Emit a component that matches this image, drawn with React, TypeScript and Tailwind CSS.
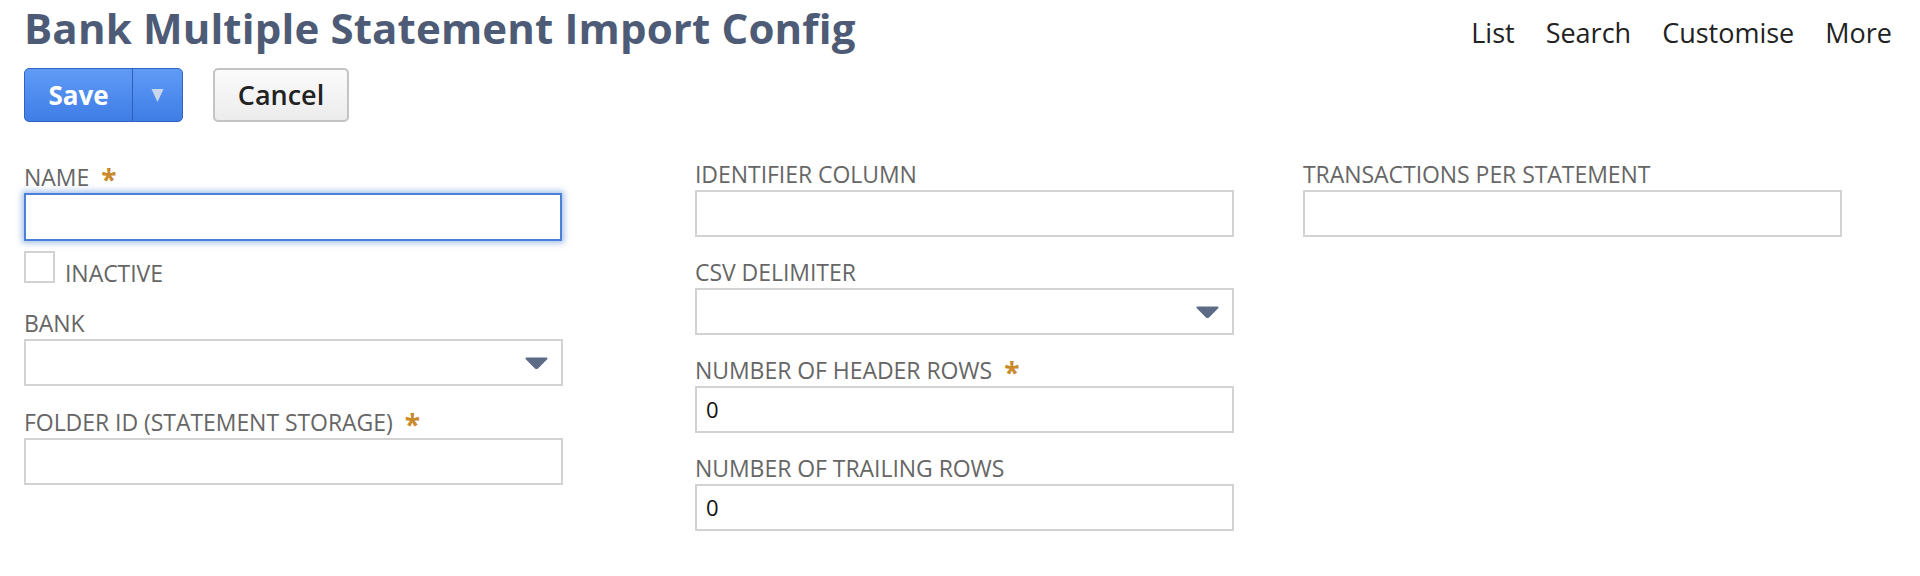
import { ReactNode } from 'react';

function Label({ text, required }: { text: string; required?: boolean }) {
  return (
    <div className="flex items-center h-[26px] text-[23px] leading-[26px] tracking-[-0.05px] text-[#666666] uppercase">
      <span>{text}</span>
      {required && <span className="ml-[12px] text-[28px] font-bold text-[#c88a2a] leading-[26px] pt-[4px]">*</span>}
    </div>
  );
}

function TextBox({ value, focused }: { value?: string; focused?: boolean }) {
  return (
    <div
      className={
        focused
          ? 'mt-[3px] h-[48px] w-[538px] border-2 border-[#4a80d8] shadow-[0_0_6px_2px_rgba(74,128,216,0.5)] bg-white'
          : 'mt-[3px] h-[47px] w-[539px] border-2 border-[#d2d2d2] bg-white flex items-center px-[9px] text-[22px] text-[#111]'
      }
    >
      {value}
    </div>
  );
}

function SelectBox() {
  return (
    <div className="mt-[3px] h-[47px] w-[539px] border-2 border-[#d2d2d2] bg-white flex items-center justify-end pr-[13px]">
      <svg width="23" height="12" viewBox="0 0 23 12">
        <path d="M1.5 1.5 H21.5 L12.6 10.6 Q11.5 11.6 10.4 10.6 Z" fill="#5d6b87" stroke="#5d6b87" strokeWidth="2" strokeLinejoin="round" />
      </svg>
    </div>
  );
}

function Field({ label, required, children, className }: { label: string; required?: boolean; children: ReactNode; className?: string }) {
  return (
    <div className={className}>
      <Label text={label} required={required} />
      {children}
    </div>
  );
}

export default function App() {
  return (
    <div className="min-h-screen bg-white px-[24px] font-['Open_Sans',sans-serif]">
      <div className="flex items-start justify-between pt-[3px]">
        <h1 className="text-[42px] leading-[50px] font-bold text-[#4e5b76] tracking-[0.15px]">Bank Multiple Statement Import Config</h1>
        <nav className="flex items-center gap-[31px] pt-[13px] pr-[4px] text-[27px] leading-[34px] text-[#222]">
          <a href="#">List</a>
          <a href="#">Search</a>
          <a href="#">Customise</a>
          <a href="#">More</a>
        </nav>
      </div>

      <div className="mt-[15px] flex items-center gap-[30px]">
        <div className="flex h-[54px] rounded-[5px] border border-[#2f63c6] bg-gradient-to-b from-[#609bf6] to-[#3f7de6] text-white">
          <button className="w-[108px] text-[26px] font-bold border-r border-[#2f5fb8]">Save</button>
          <button className="w-[49px] flex items-center justify-center">
            <svg width="13" height="15" viewBox="0 0 13 15">
              <path d="M0.5 1 H12.5 L6.5 14 Z" fill="#c9d6ec" />
            </svg>
          </button>
        </div>
        <button className="h-[54px] w-[136px] rounded-[5px] border-2 border-[#c4c4c4] bg-gradient-to-b from-[#fbfbfb] to-[#ececec] text-[27px] font-semibold text-[#222]">
          Cancel
        </button>
      </div>

      <div className="mt-[39px] flex items-start">
        <div className="w-[671px] pt-[3px]">
          <Field label="Name" required>
            <TextBox focused />
          </Field>
          <div className="mt-[10px] flex items-end gap-[10px]">
            <div className="h-[32px] w-[31px] border-2 border-[#d2d2d2] bg-white" />
            <span className="text-[23px] leading-[26px] tracking-[-0.05px] text-[#666666] translate-y-[3px]">INACTIVE</span>
          </div>
          <Field label="Bank" className="mt-[27px]">
            <SelectBox />
          </Field>
          <Field label="Folder ID (Statement Storage)" required className="mt-[23px]">
            <TextBox />
          </Field>
        </div>

        <div className="w-[608px]">
          <Field label="Identifier Column">
            <TextBox />
          </Field>
          <Field label="CSV Delimiter" className="mt-[22px]">
            <SelectBox />
          </Field>
          <Field label="Number of Header Rows" required className="mt-[22px]">
            <TextBox value="0" />
          </Field>
          <Field label="Number of Trailing Rows" className="mt-[22px]">
            <TextBox value="0" />
          </Field>
        </div>

        <div className="w-[540px]">
          <Field label="Transactions per Statement">
            <TextBox />
          </Field>
        </div>
      </div>
    </div>
  );
}
